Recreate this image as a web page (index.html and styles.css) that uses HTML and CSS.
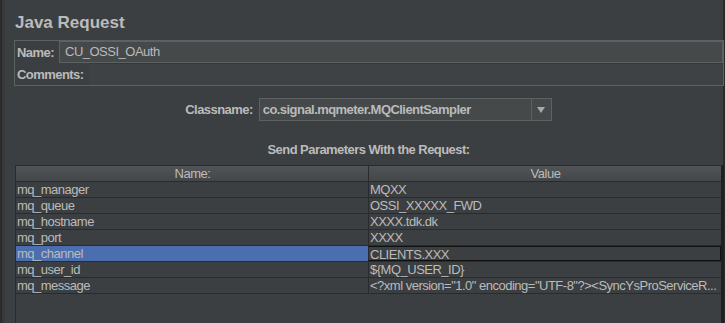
FILE: index.html
```html
<!DOCTYPE html>
<html lang="en">
<head>
    <meta charset="UTF-8">
    <title>Java Request</title>
    <link rel="stylesheet" href="styles.css">
</head>
<body>
    <div class="window">
        <h1 class="title">Java Request</h1>

        <div class="info-panel">
            <div class="info-row">
                <label>Name:</label>
                <div class="field">CU_OSSI_OAuth</div>
            </div>
            <div class="info-row">
                <label>Comments:</label>
                <div class="field field-flat"></div>
            </div>
        </div>

        <div class="center-block">
            <div class="classname">
                <label>Classname:</label>
                <div class="combo">
                    <span class="combo-text">co.signal.mqmeter.MQClientSampler</span>
                    <span class="combo-btn">
                        <svg width="8" height="6" viewBox="0 0 8 6"><path d="M0 0h8L4 6z" fill="#a9a9a9"/></svg>
                    </span>
                </div>
            </div>
            <h3 class="params-title">Send Parameters With the Request:</h3>
        </div>

        <div class="table">
            <div class="row head">
                <div class="cell">Name:</div>
                <div class="cell">Value</div>
            </div>
            <div class="row"><div class="cell">mq_manager</div><div class="cell">MQXX</div></div>
            <div class="row"><div class="cell">mq_queue</div><div class="cell">OSSI_XXXXX_FWD</div></div>
            <div class="row"><div class="cell">mq_hostname</div><div class="cell">XXXX.tdk.dk</div></div>
            <div class="row"><div class="cell">mq_port</div><div class="cell">XXXX</div></div>
            <div class="row selected"><div class="cell">mq_channel</div><div class="cell focus">CLIENTS.XXX</div></div>
            <div class="row"><div class="cell">mq_user_id</div><div class="cell">${MQ_USER_ID}</div></div>
            <div class="row"><div class="cell">mq_message</div><div class="cell">&lt;?xml version="1.0" encoding="UTF-8"?&gt;&lt;SyncYsProServiceR...</div></div>
        </div>
    </div>
</body>
</html>
```

FILE: styles.css
```css
* {
    margin: 0;
    padding: 0;
    box-sizing: border-box;
}

body {
    width: 725px;
    height: 323px;
    overflow: hidden;
    background: #2b2b2b;
    font-family: 'Liberation Sans', Arial, sans-serif;
    font-size: 13px;
    letter-spacing: -0.5px;
    color: #bbbbbb;
}

.window {
    height: 323px;
    margin: 0 2px;
    background: #3c3f41;
    border-left: 3px solid #37393b;
    padding-left: 9px;
    display: flex;
    flex-direction: column;
}

.title {
    font-size: 17px;
    font-weight: bold;
    letter-spacing: 0;
    color: #bbbbbb;
    padding: 13px 0 0 1px;
    height: 40px;
}

.info-panel {
    margin-right: -1px;
    border: 1px solid #5e6162;
    display: flex;
    flex-direction: column;
}

.info-row {
    display: flex;
    align-items: center;
    height: 22px;
}

.info-row label,
.classname label,
.combo-text,
.params-title {
    font-weight: bold;
    letter-spacing: -0.55px;
}

.info-row label {
    padding: 0 5px 0 2px;
}

.field {
    flex: 1;
    height: 22px;
    background: #45494a;
    border: 1px solid #5e6162;
    line-height: 20px;
    padding-left: 5px;
}

.field-flat {
    background: #3f4244;
    border: none;
    border-top: 1px solid #36393a;
}

.center-block {
    display: flex;
    flex-direction: column;
    align-items: center;
}

.classname {
    display: flex;
    align-items: center;
    gap: 6px;
    margin-top: 12px;
}

.combo {
    display: flex;
    width: 293px;
    height: 23px;
    background: #45494a;
    border: 1px solid #5e6162;
}

.combo-text {
    flex: 1;
    line-height: 21px;
    padding-left: 3px;
    white-space: nowrap;
}

.combo-btn {
    width: 20px;
    border-left: 1px solid #5e6162;
    display: flex;
    align-items: center;
    justify-content: center;
}

.params-title {
    margin-top: 22px;
    font-size: 13px;
    line-height: 14px;
}

.table {
    flex: 1;
    margin: 8px -1px 0 1px;
    border-left: 1px solid #2b2b2b;
    border-right: 3px solid #1f2021;
    border-top: 1px solid #2b2b2b;
}

.row {
    display: flex;
    height: 16px;
    border-bottom: 1px solid #2b2b2b;
    line-height: 15px;
}

.cell {
    flex: 0 0 352px;
    padding-left: 1px;
    white-space: nowrap;
    overflow: hidden;
    text-overflow: ellipsis;
}

.cell + .cell {
    flex: 1;
    border-left: 1px solid #2b2b2b;
}

.head {
    background: linear-gradient(#505456, #43474a);
}

.head .cell {
    text-align: center;
}

.selected .cell:first-child {
    background: #4b6eaf;
}

.focus {
    border: 1px solid #111111;
}
```
